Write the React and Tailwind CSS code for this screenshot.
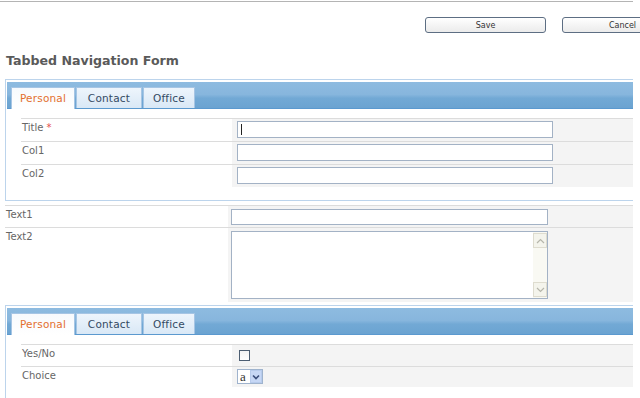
import React from "react";

const tabs = [
  { name: "Personal", w: "w-[64px]" },
  { name: "Contact", w: "w-[66px]" },
  { name: "Office", w: "w-[52px]" },
];

function TabStrip() {
  return (
    <div className="flex h-[27px] items-end gap-px border-b border-[#5b99cf] bg-[linear-gradient(to_bottom,#8ebbe0_0%,#87b6dd_48%,#72a9d5_62%,#6ba3d1_100%)] pl-[4px]">
      {tabs.map((t, i) =>
        i === 0 ? (
          <div
            key={t.name}
            className={`${t.w} -mb-px h-[22px] border border-b-0 border-[#a6c5e4] bg-[linear-gradient(to_bottom,#f7fafd,#ffffff)] pt-[3px] text-center text-[10.5px] leading-[14px] tracking-[0.2px] text-[#e3702f]`}
          >
            {t.name}
          </div>
        ) : (
          <div
            key={t.name}
            className={`${t.w} h-[21px] border border-b-0 border-[#a6c5e4] bg-[linear-gradient(to_bottom,#eef5fc,#d9e8f6)] pt-[3px] text-center text-[10.5px] leading-[14px] tracking-[0.2px] text-[#334a63]`}
          >
            {t.name}
          </div>
        )
      )}
    </div>
  );
}

function Row({ label, required, h = "h-[23px]", labelW = "w-[211px]", pl = "pl-[5px]", pt = "pt-[2px]", children }) {
  return (
    <div className={`flex ${h} border-t border-[#dcdcdc]`}>
      <div className={`${labelW} shrink-0 pl-px pt-[2px] text-[10px] leading-[14px] text-[#666]`}>
        {label}
        {required && <span className="text-[#e5484d]"> *</span>}
      </div>
      <div className={`flex-1 bg-[#f4f4f4] ${pl} ${pt}`}>{children}</div>
    </div>
  );
}

function TextInput({ w = "w-[316px]", h = "h-[17px]", caret }) {
  return (
    <div className={`${w} ${h} flex items-center border border-[#a3b2c5] bg-white pl-[3px]`}>
      {caret && <div className="h-[11px] w-px bg-[#222]" />}
    </div>
  );
}

function Chevron({ up }) {
  return (
    <svg width="9" height="6" viewBox="0 0 9 6">
      <path d={up ? "M1 5 L4.5 1.5 L8 5" : "M1 1 L4.5 4.5 L8 1"} fill="none" stroke="#b6b6ab" strokeWidth="1.2" />
    </svg>
  );
}

function TextArea() {
  return (
    <div className="flex h-[68px] w-[317px] border border-[#a3b2c5] bg-white">
      <div className="flex-1" />
      <div className="flex w-[14px] flex-col justify-between bg-[#f9f9f3] py-px">
        <div className="flex h-[15px] items-center justify-center border border-[#dedccf] bg-[#f4f4ec]">
          <Chevron up />
        </div>
        <div className="flex h-[15px] items-center justify-center border border-[#dedccf] bg-[#f4f4ec]">
          <Chevron />
        </div>
      </div>
    </div>
  );
}

function Panel({ children }) {
  return (
    <div className="ml-[5px] border-l border-t border-[#bcd4ec] pl-px pt-[2px]">
      <TabStrip />
      <div className="ml-[14px] mt-[9px]">{children}</div>
    </div>
  );
}

export default function App() {
  return (
    <div className="h-[398px] w-[640px] overflow-hidden bg-white font-['DejaVu_Sans',sans-serif]">
      <div className="w-[633px]">
        <div className="mt-px h-px bg-[#b4b4b4]" />

        <div className="mt-[15px] flex gap-[16px] pl-[425px]">
          {["Save", "Cancel"].map((b) => (
            <button
              key={b}
              className="h-[16px] w-[121px] shrink-0 rounded-[3px] border border-[#5d6e83] bg-[linear-gradient(to_bottom,#ffffff,#ebebeb)] pt-px text-[8px] leading-[12px] text-[#333]"
            >
              {b}
            </button>
          ))}
        </div>

        <h1 className="mt-[20px] pl-[6px] text-[12.6px] font-bold leading-[16px] text-[#5a5a5a]">Tabbed Navigation Form</h1>

        <div className="mt-[10px]">
          <Panel>
            <Row label="Title" required>
              <TextInput caret />
            </Row>
            <Row label="Col1">
              <TextInput />
            </Row>
            <Row label="Col2">
              <TextInput />
            </Row>
            <div className="h-[13px]" />
          </Panel>
          <div className="ml-[5px] h-px bg-[#bcd4ec]" />
        </div>

        <div className="ml-[5px] mt-[4px]">
          <Row label="Text1" h="h-[22px]" labelW="w-[223px]" pl="pl-[3px]" pt="pt-[3px]">
            <TextInput w="w-[317px]" h="h-[16px]" />
          </Row>
          <Row label="Text2" h="h-[75px]" labelW="w-[223px]" pl="pl-[3px]" pt="pt-[3px]">
            <TextArea />
          </Row>
        </div>

        <div className="mt-[3px]">
          <Panel>
            <Row label="Yes/No" h="h-[22px]" pl="pl-[7px]" pt="pt-[5px]">
              <div className="h-[11px] w-[11px] border border-[#4d5e72] bg-[linear-gradient(to_bottom,#f4f4f4,#ffffff)]" />
            </Row>
            <Row label="Choice" h="h-[21px]" pt="pt-[2px]">
              <div className="flex h-[15px] w-[26px] items-stretch border border-[#9fb3cd] bg-white">
                <span className="flex-1 pl-[2px] font-['Liberation_Serif',serif] text-[13px] leading-[13px] text-[#333]">a</span>
                <span className="flex w-[12px] items-center justify-center border border-[#b7cbec] bg-[#c6d7f5]">
                  <svg width="8" height="6" viewBox="0 0 8 6">
                    <path d="M1 1.5 L4 4.5 L7 1.5" fill="none" stroke="#3b4f7c" strokeWidth="1.6" />
                  </svg>
                </span>
              </div>
            </Row>
            <div className="h-[20px]" />
          </Panel>
        </div>
      </div>
    </div>
  );
}
